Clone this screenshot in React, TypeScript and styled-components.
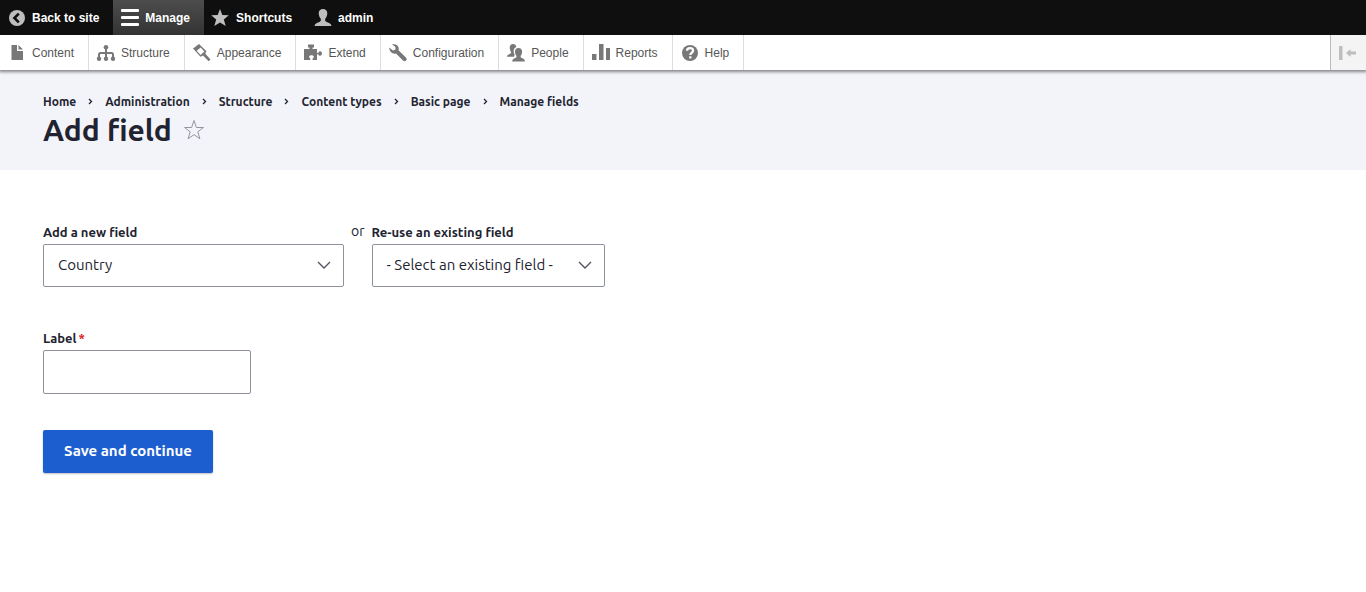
import React from 'react';
import styled, { createGlobalStyle } from 'styled-components';

const GlobalStyle = createGlobalStyle`
  *, *::before, *::after { box-sizing: border-box; }
  body {
    margin: 0;
    background: #fff;
    color: #222330;
    font: 15px/20px Ubuntu, "Noto Sans", sans-serif;
  }
  h1, ol, ul { margin: 0; padding: 0; }
  ol, ul { list-style: none; }
  a { color: inherit; text-decoration: none; }
  button, input, select { font: inherit; color: inherit; }
`;

const Toolbar = styled.nav`
  position: relative;
  font: 12px/16px "Liberation Sans", Arial, sans-serif;
  box-shadow: 0 1px 3px 1px rgba(0, 0, 0, 0.45);
`;

const Bar = styled.ul`
  display: flex;
  height: 35px;
  background: #0f0f0f;
  color: #fff;
  font-weight: 700;
`;

const Tab = styled.a<{ $active?: boolean }>`
  display: flex;
  align-items: center;
  gap: 5px;
  height: 35px;
  padding: 0 14px 0 7px;
  background: ${(p) => (p.$active ? 'linear-gradient(#4d4d4d, #333)' : 'transparent')};
`;

const Tray = styled.div`
  display: flex;
  justify-content: space-between;
  height: 35px;
  background: #fff;
`;

const Menu = styled.ul`
  display: flex;
  color: #565656;
`;

const MenuLink = styled.a`
  display: flex;
  align-items: center;
  gap: 5px;
  height: 35px;
  padding: 0 14px 0 7px;
  border-right: 1px solid #ddd;
`;

const Icon = styled.svg<{ $tone: string }>`
  display: block;
  width: 20px;
  height: 20px;
  flex: none;
  color: ${(p) => p.$tone};
  fill: currentColor;
`;

const Collapse = styled.button`
  width: 36px;
  padding: 0 0 0 7px;
  border: 0;
  border-left: 1px solid #bbb;
  background: #f4f4f4;
`;

const Header = styled.header`
  padding: 20px 43px 0;
  min-height: 100px;
  background: #f3f4f9;
`;

const Trail = styled.ol`
  display: flex;
  flex-wrap: wrap;
  font-size: 12px;
  line-height: 23px;
  font-weight: 700;
`;

const Crumb = styled.li`
  display: flex;
  align-items: center;
`;

const Separator = styled.svg`
  width: 5px;
  height: 7px;
  margin: 0 12px;
  fill: none;
  stroke: #222330;
`;

const TitleRow = styled.div`
  display: flex;
  align-items: center;
  gap: 11px;
`;

const Title = styled.h1`
  font-size: 30px;
  line-height: 34px;
  font-weight: 700;
`;

const StarButton = styled.button`
  display: block;
  padding: 0;
  border: 0;
  background: none;
  svg { display: block; }
`;

const Form = styled.form`
  padding: 51px 43px;
`;

const FieldRow = styled.div`
  display: flex;
  flex-wrap: wrap;
  gap: 7px;
`;

const Or = styled.span`
  font-size: 14px;
`;

const Field = styled.div<{ $width: number }>`
  width: ${(p) => p.$width}px;
`;

const Label = styled.label`
  display: block;
  font-size: 13px;
  line-height: 23px;
  font-weight: 700;
`;

const Required = styled.span`
  margin-left: 2px;
  color: #dc2323;
`;

const SelectWrap = styled.div`
  display: grid;
  align-items: center;
  > * { grid-area: 1 / 1; }
`;

const Select = styled.select`
  width: 100%;
  height: 43px;
  padding: 0 40px 2px 14px;
  appearance: none;
  border: 1px solid #8e929c;
  border-radius: 2px;
  background: #fff;
`;

const Chevron = styled.svg`
  justify-self: end;
  width: 14px;
  height: 8px;
  margin: 0 13px 2px 0;
  pointer-events: none;
  fill: none;
  stroke: #545560;
`;

const LabelBlock = styled.div`
  margin: 40px 0 36px;
`;

const TextInput = styled.input`
  display: block;
  width: 208px;
  height: 44px;
  padding: 0 15px;
  border: 1px solid #8e929c;
  border-radius: 2px;
  background: #fff;
`;

const Submit = styled.button`
  display: block;
  height: 43px;
  padding: 0 21px 2px;
  border: 0;
  border-radius: 2px;
  background: #1c5ecf;
  color: #fff;
  font-weight: 700;
  box-shadow: 0 1px 2px rgba(0, 0, 0, 0.25);
`;

const LIGHT = '#bebebe';
const GREY = '#787878';

const tabs = [
  {
    label: 'Back to site',
    tone: LIGHT,
    icon: (
      <>
        <circle cx="10" cy="10" r="8" />
        <path d="M11.800 5.600 7.400 10l4.400 4.400" fill="none" stroke="#0f0f0f" strokeWidth="2.600" />
      </>
    ),
  },
  {
    label: 'Manage',
    tone: '#fff',
    active: true,
    icon: <path d="M2 1h16q1 0 1 1v1q0 1-1 1H2Q1 4 1 3V2q0-1 1-1zM2 8h16q1 0 1 1v1q0 1-1 1H2q-1 0-1-1V9q0-1 1-1zM2 15h16q1 0 1 1v1q0 1-1 1H2q-1 0-1-1v-1q0-1 1-1z" />,
  },
  {
    label: 'Shortcuts',
    tone: LIGHT,
    icon: <path d="m9 1 2.300 6 6.500.300-5 4.200 1.900 6.500-5.700-3.500L3.300 18l1.900-6.500-5-4.200L6.700 7z" />,
  },
  {
    label: 'admin',
    tone: LIGHT,
    icon: <path d="M10 1c2.700 0 4.300 1.600 4.300 4.300 0 2.100-1 4.400-2.100 5.500-.3 1.700.1 2.600 1.500 3.200 2.600.8 4.500 1.700 4.800 4H1.500c.3-2.300 2.200-3.200 4.800-4 1.400-.6 1.800-1.500 1.500-3.200-1.100-1.100-2.100-3.400-2.100-5.500C5.700 2.600 7.300 1 10 1z" />,
  },
];

const menu = [
  { label: 'Content', icon: <path d="M4.500 2H10v6h6v9H4.500zM11.500 2 16 6.500h-4.500z" /> },
  {
    label: 'Structure',
    icon: (
      <>
        <circle cx="10" cy="4.200" r="2.300" />
        <path d="M3 15v-3.500q0-1.500 1.500-1.500h11q1.500 0 1.500 1.500V15M10 5v10" fill="none" stroke="currentColor" strokeWidth="2" />
        <circle cx="3" cy="15.800" r="2.200" />
        <circle cx="10" cy="15.800" r="2.200" />
        <circle cx="17" cy="15.800" r="2.200" />
      </>
    ),
  },
  {
    label: 'Appearance',
    icon: (
      <>
        <path d="M7 1 1 5.600l7.500 8.100 2.500-1.300 5.600 5.900 1.900-1.900-5.300-5.800 1.300-2.400z" />
        <path d="m8.700 4.500-4 3.200 3.900 4.200 3.700-3.500z" fill="#fff" />
      </>
    ),
  },
  {
    label: 'Extend',
    icon: <path d="M1 6h5.500V4.500H5V1.500h6v3H9.500V6h4.500v4h1.300c.4-1.200 1-1.700 1.800-1.700 1.200 0 1.900 1 1.900 2.200s-.7 2.300-1.900 2.300c-.8 0-1.400-.5-1.800-1.500H14V17H9.600v-1.500c.8-.5 1.200-1 1.200-1.600 0-1-1-1.600-2.300-1.600s-2.400.6-2.400 1.600c0 .6.400 1.100 1.200 1.600V17H1v-4.500V6z" />,
  },
  {
    label: 'Configuration',
    icon: <path d="M1.200 4.500 5 7.500 7.500 6.500 7.300 3.800 4 1.500c3-1 6.300.500 6.700 3.600.100.800 0 1.500-.200 2.100l7.400 7.300c1.100 1.100.900 2.300.200 3.100-.900.800-2.200.800-3.100-.100L8 10.500C5 11.500 1.300 9 1.200 4.500z" />,
  },
  {
    label: 'People',
    icon: (
      <>
        <path d="M7 1c2 0 3.200 1.200 3.200 3-1.700.8-2.700 2.500-2.500 4.700.1 1 .4 2 .9 3L8 13.800H1c.1-1.800 1.200-2.400 2.800-2.900 1.100-.4 1.500-1 1.200-2-.7-.8-1.300-2.600-1.300-4.300C3.700 2.300 5 1 7 1z" />
        <path d="M12.500 5c2.300 0 3.600 1.400 3.600 3.700 0 1.600-.6 3.100-1.400 4-.3 1.200.1 1.900 1.200 2.300 1.700.6 2.900 1.300 3 3.500H6.200c.1-2.200 1.300-2.900 3-3.500 1.100-.4 1.500-1.100 1.200-2.300-.8-.9-1.400-2.400-1.400-4C9 6.400 10.200 5 12.500 5z" stroke="#fff" strokeWidth="1" paintOrder="stroke" />
      </>
    ),
  },
  { label: 'Reports', icon: <path d="M1 11h4.500v6H1zM8 1h4.500v16H8zM15 5h4v12h-4z" /> },
  {
    label: 'Help',
    icon: (
      <>
        <circle cx="10" cy="10" r="8" />
        <path d="M7 7.800C7 6 8.300 5.200 10 5.200s3.100.9 3.100 2.500c0 2.100-2.800 2-2.800 4.200M10.300 13.200v2.200" fill="none" stroke="#fff" strokeWidth="2.200" />
      </>
    ),
  },
];

const crumbs = ['Home', 'Administration', 'Structure', 'Content types', 'Basic page', 'Manage fields'];

function SelectField({ id, label, width, option }: { id: string; label: string; width: number; option: string }) {
  return (
    <Field $width={width}>
      <Label htmlFor={id}>{label}</Label>
      <SelectWrap>
        <Select id={id}>
          <option>{option}</option>
        </Select>
        <Chevron viewBox="0 0 14 8" aria-hidden="true">
          <path d="m1 1 6 6 6-6" strokeWidth="1.400" />
        </Chevron>
      </SelectWrap>
    </Field>
  );
}

export default function App() {
  return (
    <>
      <GlobalStyle />
      <Toolbar aria-label="Administration">
        <Bar>
          {tabs.map((t) => (
            <li key={t.label}>
              <Tab href="#" $active={t.active}>
                <Icon $tone={t.tone} viewBox="0 0 20 20" aria-hidden="true">{t.icon}</Icon>
                {t.label}
              </Tab>
            </li>
          ))}
        </Bar>
        <Tray>
          <Menu>
            {menu.map((m) => (
              <li key={m.label}>
                <MenuLink href="#">
                  <Icon $tone={GREY} viewBox="0 0 20 20" aria-hidden="true">{m.icon}</Icon>
                  {m.label}
                </MenuLink>
              </li>
            ))}
          </Menu>
          <Collapse type="button" aria-label="Vertical orientation">
            <Icon $tone={LIGHT} viewBox="0 0 20 20" aria-hidden="true">
              <path d="M1 3h3.500v14H1zM8 10l4.500-4v2.500H18v3h-5.500V14z" />
            </Icon>
          </Collapse>
        </Tray>
      </Toolbar>
      <Header>
        <Trail aria-label="Breadcrumb">
          {crumbs.map((c, i) => (
            <Crumb key={c}>
              {i > 0 && (
                <Separator viewBox="0 0 5 7" aria-hidden="true">
                  <path d="m1 1 2.500 2.500L1 6" strokeWidth="1.300" />
                </Separator>
              )}
              <a href="#">{c}</a>
            </Crumb>
          ))}
        </Trail>
        <TitleRow>
          <Title>Add field</Title>
          <StarButton type="button" aria-label="Add to shortcuts">
            <svg width="22" height="22" viewBox="0 0 22 22" fill="none" stroke="#94969f">
              <path d="m11 1.500 2.400 7h7.100l-5.700 4.300 2.100 7L11 15.600l-5.900 4.200 2.100-7L1.500 8.500h7.100z" />
            </svg>
          </StarButton>
        </TitleRow>
      </Header>
      <Form onSubmit={(e) => e.preventDefault()}>
        <FieldRow>
          <SelectField id="new-field" label="Add a new field" width={301} option="Country" />
          <Or>or</Or>
          <SelectField id="existing-field" label="Re-use an existing field" width={233} option="- Select an existing field -" />
        </FieldRow>
        <LabelBlock>
          <Label htmlFor="field-label">
            Label<Required>*</Required>
          </Label>
          <TextInput id="field-label" type="text" required />
        </LabelBlock>
        <Submit type="submit">Save and continue</Submit>
      </Form>
    </>
  );
}
